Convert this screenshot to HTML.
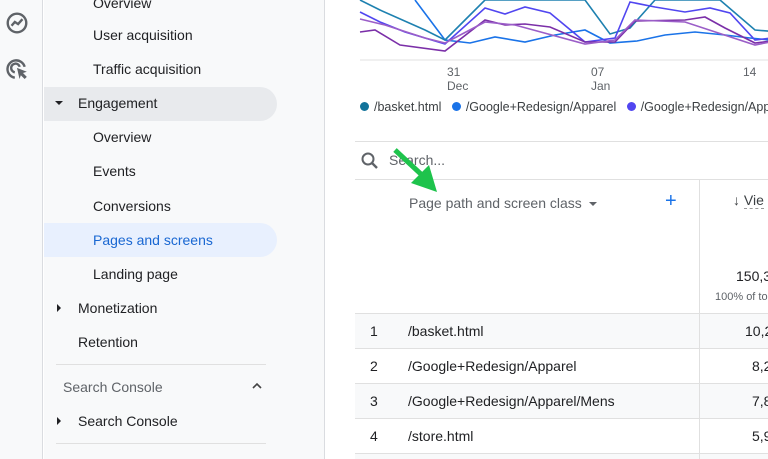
<!DOCTYPE html>
<html><head><style>
*{margin:0;padding:0;box-sizing:border-box}
body{width:768px;height:459px;overflow:hidden;background:#fff;font-family:"Liberation Sans",sans-serif;position:relative;color:#202124}
.rail{position:absolute;left:0;top:0;width:43px;height:459px;background:#f8f9fa;border-right:1px solid #dadce0}
.side{position:absolute;left:44px;top:0;width:281px;height:459px;background:#f8f9fa;border-right:1px solid #dadce0}
.it{position:absolute;font-size:14px;color:#202124;height:34px;line-height:34px}
.sub{left:93px}
.top{left:78px}
.hl{position:absolute;left:44px;width:233px;height:34px;border-radius:0 17px 17px 0}
.tri{position:absolute;left:55px;width:0;height:0}
.a{position:absolute;font-size:12px;color:#5f6368}
.row{position:absolute;left:355px;width:413px;height:35px;border-top:1px solid #e0e0e0;font-size:14px;line-height:34px}
.row span{position:absolute}
</style></head><body>
<div class="rail"></div>
<svg style="position:absolute;left:5px;top:11px" width="24" height="24" viewBox="0 0 22 22"><circle cx="11" cy="11" r="8.5" fill="none" stroke="#5f6368" stroke-width="2.2"/><path d="M6 13.5l3-3.5 3 2 4-4.5" fill="none" stroke="#5f6368" stroke-width="2.2"/></svg>
<svg style="position:absolute;left:5px;top:57px" width="24" height="24" viewBox="0 0 22 22"><path d="M18 9A8 8 0 1 0 9 19" fill="none" stroke="#5f6368" stroke-width="2.2"/><path d="M13.5 9A4 4 0 1 0 9 14" fill="none" stroke="#5f6368" stroke-width="2.2"/><path d="M11 10l9 3.5-3.5 1.2 3.5 3.5-2 2-3.5-3.5-1.2 3.5z" fill="#5f6368"/></svg>
<div class="side"></div>
<div class="hl" style="top:87px;background:#e8eaed"></div>
<div class="hl" style="top:223px;background:#e8f0fe"></div>
<div class="it sub" style="top:-14px">Overview</div>
<div class="it sub" style="top:18px">User acquisition</div>
<div class="it sub" style="top:52px">Traffic acquisition</div>
<div class="tri" style="top:101px;border-left:4px solid transparent;border-right:4px solid transparent;border-top:4px solid #202124"></div>
<div class="it top" style="top:86px">Engagement</div>
<div class="it sub" style="top:120px">Overview</div>
<div class="it sub" style="top:154px">Events</div>
<div class="it sub" style="top:189px">Conversions</div>
<div class="it sub" style="top:223px;color:#1967d2">Pages and screens</div>
<div class="it sub" style="top:257px">Landing page</div>
<div class="tri" style="top:304px;left:57px;border-top:4px solid transparent;border-bottom:4px solid transparent;border-left:4px solid #202124"></div>
<div class="it top" style="top:291px">Monetization</div>
<div class="it top" style="top:325px">Retention</div>
<div style="position:absolute;left:56px;top:364px;width:210px;height:1px;background:#e0e0e0"></div>
<div class="it" style="left:63px;top:370px;color:#5f6368">Search Console</div>
<svg style="position:absolute;left:251px;top:382px" width="12" height="8"><path d="M2 6l4-4 4 4" fill="none" stroke="#444" stroke-width="1.6"/></svg>
<div class="tri" style="top:417px;left:57px;border-top:4px solid transparent;border-bottom:4px solid transparent;border-left:4px solid #202124"></div>
<div class="it top" style="top:404px">Search Console</div>
<div style="position:absolute;left:56px;top:443px;width:210px;height:1px;background:#e0e0e0"></div>

<svg style="position:absolute;left:355px;top:0" width="413" height="65">
<line x1="5" y1="60" x2="413" y2="60" stroke="#e0e0e0"/>
<polyline fill="none" stroke="#1a73e8" stroke-width="1.6" points="60,0 90,40 115,43 140,37 170,42 200,35 230,30 255,43 282,41 310,35 340,32 370,35 395,38 425,41"/>
<polyline fill="none" stroke="#1e81b0" stroke-width="1.6" points="5,0 25,10 70,30 90,40 110,20 130,0 230,0 255,34 275,28 300,0 340,0 365,0 400,30 425,32"/>
<polyline fill="none" stroke="#5146f0" stroke-width="1.6" points="5,12 25,22 50,32 90,44 130,8 150,14 170,7 195,13 230,42 260,38 275,2 300,7 330,12 355,8 375,13 400,40 425,37"/>
<polyline fill="none" stroke="#7b2fa8" stroke-width="1.6" points="5,32 20,30 45,45 90,51 130,20 150,25 170,24 195,27 230,42 260,42 280,21 330,20 350,17 370,28 400,43 425,40"/>
<polyline fill="none" stroke="#9b5ec8" stroke-width="1.6" points="5,19 30,25 70,38 90,43 130,22 160,25 230,44 260,40 280,20 330,22 400,45 425,40"/>
</svg>
<div class="a" style="left:447px;top:65px">31<br>Dec</div>
<div class="a" style="left:591px;top:65px">07<br>Jan</div>
<div class="a" style="left:743px;top:65px">14</div>
<div style="position:absolute;left:360px;top:100px;width:408px;overflow:hidden;font-size:12.5px;color:#3c4043;white-space:nowrap">
<span style="display:inline-block;width:9px;height:9px;border-radius:50%;background:#12739a;margin-right:5px"></span>/basket.html&nbsp;&nbsp;&nbsp;<span style="display:inline-block;width:9px;height:9px;border-radius:50%;background:#1a73e8;margin-right:5px"></span>/Google+Redesign/Apparel&nbsp;&nbsp;&nbsp;<span style="display:inline-block;width:9px;height:9px;border-radius:50%;background:#5146f0;margin-right:5px"></span>/Google+Redesign/Apparel/Mens</div>
<div style="position:absolute;left:355px;top:141px;width:413px;height:1px;background:#e0e0e0"></div>
<svg style="position:absolute;left:360px;top:151px" width="20" height="20"><circle cx="8" cy="8" r="5.5" fill="none" stroke="#5f6368" stroke-width="2"/><path d="M12 12l5 5" stroke="#5f6368" stroke-width="2.4"/></svg>
<div style="position:absolute;left:389px;top:152px;font-size:14px;color:#5f6368">Search...</div>
<div style="position:absolute;left:355px;top:179px;width:413px;height:1px;background:#e0e0e0"></div>
<div style="position:absolute;left:699px;top:179px;width:1px;height:280px;background:#e0e0e0"></div>
<svg style="position:absolute;left:385px;top:145px" width="60" height="52"><path d="M10 5 L38 31" stroke="#1ec34c" stroke-width="5"/><path d="M52 47 L26 38 L44 20z" fill="#1ec34c"/></svg>
<div style="position:absolute;left:409px;top:195px;font-size:14px;color:#5f6368">Page path and screen class</div>
<div class="tri" style="left:589px;top:202px;border-left:4px solid transparent;border-right:4px solid transparent;border-top:4px solid #5f6368"></div>
<div style="position:absolute;left:665px;top:190px;font-size:20px;color:#1a73e8">+</div>
<div style="position:absolute;left:733px;top:192px;font-size:14px;color:#3c4043">↓ <span style="border-bottom:1px dashed #999">Vie</span></div>
<div style="position:absolute;left:736px;top:268px;font-size:14px;color:#202124">150,3</div>
<div style="position:absolute;left:715px;top:291px;font-size:11px;color:#5f6368">100% of to</div>
<div class="row" style="top:313px;background:#f8f9fa"><span style="left:15px">1</span><span style="left:53px">/basket.html</span><span style="left:390px">10,2</span></div>
<div class="row" style="top:348px"><span style="left:15px">2</span><span style="left:53px">/Google+Redesign/Apparel</span><span style="left:397px">8,2</span></div>
<div class="row" style="top:383px;background:#f8f9fa"><span style="left:15px">3</span><span style="left:53px">/Google+Redesign/Apparel/Mens</span><span style="left:397px">7,8</span></div>
<div class="row" style="top:418px"><span style="left:15px">4</span><span style="left:53px">/store.html</span><span style="left:397px">5,9</span></div>
<div style="position:absolute;left:355px;top:453px;width:413px;height:6px;background:#f8f9fa;border-top:1px solid #e0e0e0"></div>
<div style="position:absolute;left:699px;top:313px;width:1px;height:146px;background:#e0e0e0"></div>
</body></html>
